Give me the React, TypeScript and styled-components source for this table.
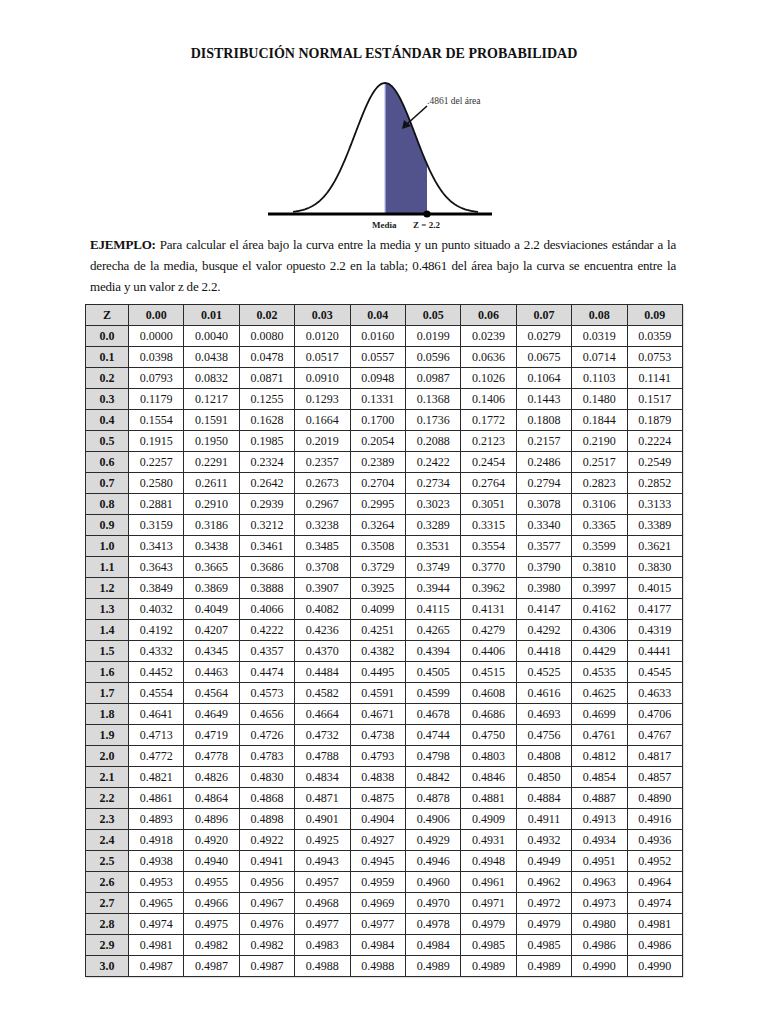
import React from "react";
import styled, { createGlobalStyle } from "styled-components";

const Global = createGlobalStyle`
  html, body { margin: 0; padding: 0; background: #ffffff; }
  body { font-family: "Liberation Serif", "Times New Roman", serif; color: #111; }
`;

const Page = styled.div`
  width: 768px;
  min-height: 1024px;
  display: flex;
  flex-direction: column;
  align-items: flex-start;
`;

const Title = styled.h1`
  align-self: stretch;
  margin: 46px 0 0 0;
  font-size: 14px;
  line-height: 16px;
  font-weight: bold;
  text-align: center;
  color: #111;
`;

const Figure = styled.div`
  margin: 8px 0 0 260px;
  height: 164px;
  display: flex;
`;

const Example = styled.p`
  margin: 0 0 0 90px;
  width: 586px;
  font-size: 13px;
  line-height: 21px;
  letter-spacing: -0.18px;
  text-align: justify;
  color: #111;
`;

const Strong = styled.b`
  font-weight: bold;
`;

const Table = styled.table`
  margin: 7px 0 0 85px;
  width: 598px;
  border-collapse: collapse;
  table-layout: fixed;
  box-shadow: 1px 1px 1px rgba(0, 0, 0, 0.12);
`;

const Cell = styled.td<{ $shade?: boolean; $bold?: boolean }>`
  height: 20px;
  padding: 0;
  border: 1px solid #2a2a2a;
  text-align: center;
  vertical-align: middle;
  font-size: 12px;
  line-height: 14px;
  font-weight: ${(p) => (p.$bold ? "bold" : "normal")};
  background: ${(p) => (p.$shade ? "#dadada" : "#ffffff")};
  color: #151515;
`;

const HeadCell = styled(Cell).attrs({ as: "th" })``;

const ZCol = styled.col`
  width: 43px;
`;
const DataCol = styled.col``;

const cols = ["0.00", "0.01", "0.02", "0.03", "0.04", "0.05", "0.06", "0.07", "0.08", "0.09"];

const raw = `0.0000 0.0040 0.0080 0.0120 0.0160 0.0199 0.0239 0.0279 0.0319 0.0359
0.0398 0.0438 0.0478 0.0517 0.0557 0.0596 0.0636 0.0675 0.0714 0.0753
0.0793 0.0832 0.0871 0.0910 0.0948 0.0987 0.1026 0.1064 0.1103 0.1141
0.1179 0.1217 0.1255 0.1293 0.1331 0.1368 0.1406 0.1443 0.1480 0.1517
0.1554 0.1591 0.1628 0.1664 0.1700 0.1736 0.1772 0.1808 0.1844 0.1879
0.1915 0.1950 0.1985 0.2019 0.2054 0.2088 0.2123 0.2157 0.2190 0.2224
0.2257 0.2291 0.2324 0.2357 0.2389 0.2422 0.2454 0.2486 0.2517 0.2549
0.2580 0.2611 0.2642 0.2673 0.2704 0.2734 0.2764 0.2794 0.2823 0.2852
0.2881 0.2910 0.2939 0.2967 0.2995 0.3023 0.3051 0.3078 0.3106 0.3133
0.3159 0.3186 0.3212 0.3238 0.3264 0.3289 0.3315 0.3340 0.3365 0.3389
0.3413 0.3438 0.3461 0.3485 0.3508 0.3531 0.3554 0.3577 0.3599 0.3621
0.3643 0.3665 0.3686 0.3708 0.3729 0.3749 0.3770 0.3790 0.3810 0.3830
0.3849 0.3869 0.3888 0.3907 0.3925 0.3944 0.3962 0.3980 0.3997 0.4015
0.4032 0.4049 0.4066 0.4082 0.4099 0.4115 0.4131 0.4147 0.4162 0.4177
0.4192 0.4207 0.4222 0.4236 0.4251 0.4265 0.4279 0.4292 0.4306 0.4319
0.4332 0.4345 0.4357 0.4370 0.4382 0.4394 0.4406 0.4418 0.4429 0.4441
0.4452 0.4463 0.4474 0.4484 0.4495 0.4505 0.4515 0.4525 0.4535 0.4545
0.4554 0.4564 0.4573 0.4582 0.4591 0.4599 0.4608 0.4616 0.4625 0.4633
0.4641 0.4649 0.4656 0.4664 0.4671 0.4678 0.4686 0.4693 0.4699 0.4706
0.4713 0.4719 0.4726 0.4732 0.4738 0.4744 0.4750 0.4756 0.4761 0.4767
0.4772 0.4778 0.4783 0.4788 0.4793 0.4798 0.4803 0.4808 0.4812 0.4817
0.4821 0.4826 0.4830 0.4834 0.4838 0.4842 0.4846 0.4850 0.4854 0.4857
0.4861 0.4864 0.4868 0.4871 0.4875 0.4878 0.4881 0.4884 0.4887 0.4890
0.4893 0.4896 0.4898 0.4901 0.4904 0.4906 0.4909 0.4911 0.4913 0.4916
0.4918 0.4920 0.4922 0.4925 0.4927 0.4929 0.4931 0.4932 0.4934 0.4936
0.4938 0.4940 0.4941 0.4943 0.4945 0.4946 0.4948 0.4949 0.4951 0.4952
0.4953 0.4955 0.4956 0.4957 0.4959 0.4960 0.4961 0.4962 0.4963 0.4964
0.4965 0.4966 0.4967 0.4968 0.4969 0.4970 0.4971 0.4972 0.4973 0.4974
0.4974 0.4975 0.4976 0.4977 0.4977 0.4978 0.4979 0.4979 0.4980 0.4981
0.4981 0.4982 0.4982 0.4983 0.4984 0.4984 0.4985 0.4985 0.4986 0.4986
0.4987 0.4987 0.4987 0.4988 0.4988 0.4989 0.4989 0.4989 0.4990 0.4990`;

const rows = raw.split("\n").map((line, i) => ({
  z: (i / 10).toFixed(1),
  values: line.trim().split(/\s+/),
}));

const CX = 125;
const BASE = 143;
const PEAK = 130;
const SIGMA = 30;
const yAt = (x: number) => BASE - PEAK * Math.exp(-((x - CX) ** 2) / (2 * SIGMA * SIGMA));

function curvePath(x0: number, x1: number, step = 1) {
  const pts: string[] = [];
  for (let x = x0; x <= x1 + 0.001; x += step) {
    pts.push(`${x.toFixed(1)},${yAt(x).toFixed(2)}`);
  }
  return pts;
}

function BellCurve() {
  const full = curvePath(33, 218, 1);
  const shade = curvePath(CX, 167, 1);
  const shadePath = `M${CX},144 L${shade.join(" L")} L167,144 Z`;
  return (
    <svg width="240" height="164" viewBox="0 0 240 164">
      <path d={shadePath} fill="#52528d" />
      <line x1={CX} y1={yAt(CX)} x2={CX} y2={144} stroke="#b8c2ea" strokeWidth="1.2" />
      <path d={`M${full.join(" L")}`} fill="none" stroke="#111" strokeWidth="1.8" />
      <line x1="8" y1="144" x2="232" y2="144" stroke="#000" strokeWidth="3" />
      <circle cx="167" cy="144" r="3.6" fill="#000" />
      <line x1="167" y1="36" x2="147" y2="54" stroke="#111" strokeWidth="1.6" />
      <polygon points="142,59 144,50 151,56" fill="#111" />
      <text x="167" y="34" fontFamily="Liberation Serif, serif" fontSize="9.5" fill="#333">
        .4861 del área
      </text>
      <text x="112" y="158" fontFamily="Liberation Serif, serif" fontSize="9" fontWeight="bold" fill="#222">
        Media
      </text>
      <text x="153" y="158" fontFamily="Liberation Serif, serif" fontSize="9" fontWeight="bold" fill="#222">
        Z = 2.2
      </text>
    </svg>
  );
}

export default function App() {
  return (
    <>
      <Global />
      <Page>
        <Title>DISTRIBUCIÓN NORMAL ESTÁNDAR DE PROBABILIDAD</Title>
        <Figure>
          <BellCurve />
        </Figure>
        <Example>
          <Strong>EJEMPLO:</Strong> Para calcular el área bajo la curva entre la media y un punto situado a 2.2
          desviaciones estándar a la derecha de la media, busque el valor opuesto 2.2 en la tabla; 0.4861 del
          área bajo la curva se encuentra entre la media y un valor z de 2.2.
        </Example>
        <Table>
          <colgroup>
            <ZCol />
            {cols.map((c) => (
              <DataCol key={c} />
            ))}
          </colgroup>
          <thead>
            <tr>
              <HeadCell $shade $bold>Z</HeadCell>
              {cols.map((c) => (
                <HeadCell key={c} $shade $bold>
                  {c}
                </HeadCell>
              ))}
            </tr>
          </thead>
          <tbody>
            {rows.map((r) => (
              <tr key={r.z}>
                <Cell $shade $bold>{r.z}</Cell>
                {r.values.map((v, j) => (
                  <Cell key={j}>{v}</Cell>
                ))}
              </tr>
            ))}
          </tbody>
        </Table>
      </Page>
    </>
  );
}
